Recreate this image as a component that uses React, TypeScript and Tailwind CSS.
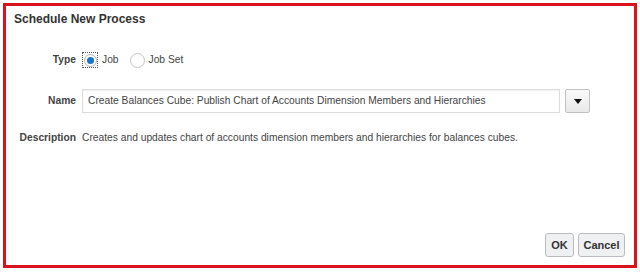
import React from 'react';

export default function App() {
  return (
    <div className="w-[640px] h-[272px] bg-white pt-[3px] pl-[3px] font-['Liberation_Sans',Arial,sans-serif] text-[#333]">
      <div className="w-[634px] h-[265px] border-[3px] border-[#d9121c] flex flex-col">
        <h1 className="pl-[8px] pt-[5px] text-[12px] leading-[16px] font-bold text-[#333]">Schedule New Process</h1>

        <div className="grid grid-cols-[57px_1fr] gap-x-[6px] ml-[13px] mt-[23px] items-center text-[10.25px]">
          <span className="text-right font-bold text-[#444]">Type</span>
          <div className="flex items-center h-[20px]">
            <span className="w-[16px] h-[16px] border border-dotted border-[#555] flex items-center justify-center">
              <span className="w-[13px] h-[13px] rounded-full border border-[#b5b5b5] bg-white flex items-center justify-center">
                <span className="w-[7px] h-[7px] rounded-full bg-[#1a73c9]" />
              </span>
            </span>
            <span className="ml-[4px] text-[#444]">Job</span>
            <span className="ml-[11px] w-[15px] h-[15px] rounded-full border border-[#c4c4c4] bg-white" />
            <span className="ml-[4px] text-[#444]">Job Set</span>
          </div>

          <span className="text-right font-bold text-[#444] mt-[19px]">Name</span>
          <div className="flex items-center mt-[19px]">
            <div className="w-[478px] h-[24px] border border-[#dcdcdc] bg-white flex items-center pl-[5px] text-[#444] shadow-[inset_0_1px_1px_rgba(0,0,0,0.06)]">
              Create Balances Cube: Publish Chart of Accounts Dimension Members and Hierarchies
            </div>
            <button className="ml-[5px] w-[25px] h-[24px] border border-[#c2c2c2] rounded-[2px] bg-gradient-to-b from-[#fafafa] to-[#e9e9e9] flex items-center justify-center">
              <svg width="8" height="5" viewBox="0 0 8 5"><path d="M0 0h8L4 5z" fill="#111" /></svg>
            </button>
          </div>

          <span className="text-right font-bold text-[#444] mt-[17px]">Description</span>
          <span className="mt-[17px] text-[#444]">
            Creates and updates chart of accounts dimension members and hierarchies for balances cubes.
          </span>
        </div>

        <div className="mt-auto mb-[8px] mr-[9px] flex justify-end gap-[4px]">
          <button className="h-[24px] w-[29px] border border-[#b8bcc1] rounded-[3px] bg-[#eef0f2] text-[11px] font-bold text-[#333]">OK</button>
          <button className="h-[24px] w-[47px] border border-[#b8bcc1] rounded-[3px] bg-[#eef0f2] text-[11px] font-bold text-[#333]">Cancel</button>
        </div>
      </div>
    </div>
  );
}
